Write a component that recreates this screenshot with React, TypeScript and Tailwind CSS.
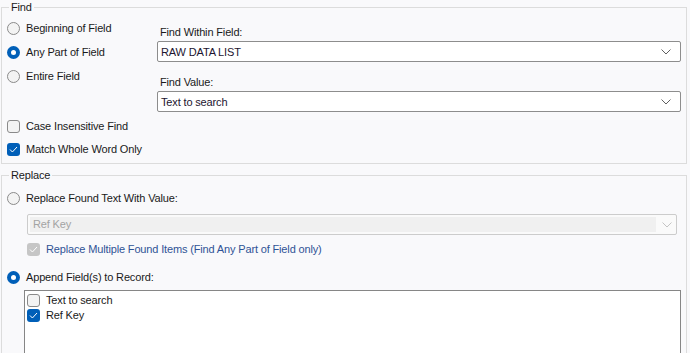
import React from 'react';

const font = { fontFamily: '"Liberation Sans", Arial, sans-serif' };

const Chevron = ({ color = '#606060' }: { color?: string }) => (
  <svg width="10" height="6" viewBox="0 0 10 6" fill="none">
    <path d="M0.5 0.5 L5 5 L9.5 0.5" stroke={color} strokeWidth="1" />
  </svg>
);

const Check = () => (
  <svg width="9" height="7" viewBox="0 0 9 7" fill="none">
    <path d="M1 3.5 L3.4 6 L8 1" stroke="white" strokeWidth="1" />
  </svg>
);

const Radio = ({ checked }: { checked?: boolean }) =>
  checked ? (
    <span className="flex w-[13px] h-[13px] shrink-0 items-center justify-center rounded-full bg-[#005fb8]">
      <span className="w-[5px] h-[5px] rounded-full bg-white" />
    </span>
  ) : (
    <span className="w-[13px] h-[13px] shrink-0 rounded-full border border-[#8a8a8a] bg-[#f3f3f3]" />
  );

const Box = ({ checked, disabled }: { checked?: boolean; disabled?: boolean }) => {
  if (checked) {
    return (
      <span
        className={`flex w-[13px] h-[13px] shrink-0 items-center justify-center rounded-[3px] ${
          disabled ? 'bg-[#c6c6c6]' : 'bg-[#005fb8]'
        }`}
      >
        <Check />
      </span>
    );
  }
  return <span className="w-[13px] h-[13px] shrink-0 rounded-[3px] border border-[#8a8a8a] bg-[#f3f3f3]" />;
};

const Combo = ({ value }: { value: string }) => (
  <div className="flex h-[21px] items-center rounded-[2px] border border-[#8d8d8d] bg-white">
    <span className="flex-1 pl-[3px] leading-[14px] text-[#1c1530]">{value}</span>
    <span className="mr-[9px] flex items-center">
      <Chevron />
    </span>
  </div>
);

const App: React.FC = () => {
  return (
    <div
      className="w-[690px] h-[353px] overflow-hidden whitespace-nowrap bg-[#f9f9fb] pl-[1px] pr-[3px] pt-[2px] text-[11px] tracking-[-0.15px] text-[#1a1a1a]"
      style={font}
    >
      {/* Find */}
      <fieldset className="border border-[#dcdcdc]">
        <legend className="ml-[7px] px-[2px] leading-[11px]">Find</legend>
        <div className="flex h-[150px]">
          <div className="flex w-[155px] flex-col pl-[5px] pt-[3px]">
            <label className="flex h-[24px] items-center gap-[6px]">
              <Radio />
              Beginning of Field
            </label>
            <label className="flex h-[24px] items-center gap-[6px]">
              <Radio checked />
              Any Part of Field
            </label>
            <label className="flex h-[25px] items-center gap-[6px]">
              <Radio />
              Entire Field
            </label>
            <label className="mt-[26px] flex h-[23px] items-center gap-[6px]">
              <Box />
              Case Insensitive Find
            </label>
            <label className="flex h-[23px] items-center gap-[6px]">
              <Box checked />
              Match Whole Word Only
            </label>
          </div>
          <div className="flex flex-1 flex-col pr-[5px]">
            <div className="mt-[12px] h-[14px] pl-[3px] leading-[14px]">Find Within Field:</div>
            <div className="mt-[2px]">
              <Combo value="RAW DATA LIST" />
            </div>
            <div className="mt-[13px] h-[14px] pl-[3px] leading-[14px]">Find Value:</div>
            <div className="mt-[2px]">
              <Combo value="Text to search" />
            </div>
          </div>
        </div>
      </fieldset>

      {/* Replace */}
      <fieldset className="mt-[6px] border border-[#dcdcdc]">
        <legend className="ml-[7px] px-[2px] leading-[11px]">Replace</legend>
        <div className="flex flex-col pl-[5px] pt-[5px]">
          <label className="flex h-[24px] items-center gap-[6px]">
            <Radio />
            Replace Found Text With Value:
          </label>
          <div className="ml-[20px] mr-[9px] mt-[4px] flex h-[21px] rounded-[2px] border border-[#cccccc] bg-[#fafafa]">
            <div className="m-[2px] flex flex-1 items-center bg-[#f0f0f0] pl-[3px] text-[#a3a3a3]">Ref Key</div>
            <span className="flex w-[18px] items-center justify-center">
              <Chevron color="#c4c4c4" />
            </span>
          </div>
          <label className="ml-[20px] mt-[2px] flex h-[24px] items-center gap-[6px] text-[#2f5396]">
            <Box checked disabled />
            Replace Multiple Found Items (Find Any Part of Field only)
          </label>
          <label className="mt-[4px] flex h-[24px] items-center gap-[6px]">
            <Radio checked />
            Append Field(s) to Record:
          </label>
          <div className="ml-[17px] mr-[5px] mt-[1px] h-[80px] border border-[#868686] bg-white pl-[2px] pt-[2px]">
            <label className="flex h-[15px] items-center gap-[6px]">
              <Box />
              Text to search
            </label>
            <label className="flex h-[15px] items-center gap-[6px]">
              <Box checked />
              Ref Key
            </label>
          </div>
        </div>
      </fieldset>
    </div>
  );
};

export default App;
